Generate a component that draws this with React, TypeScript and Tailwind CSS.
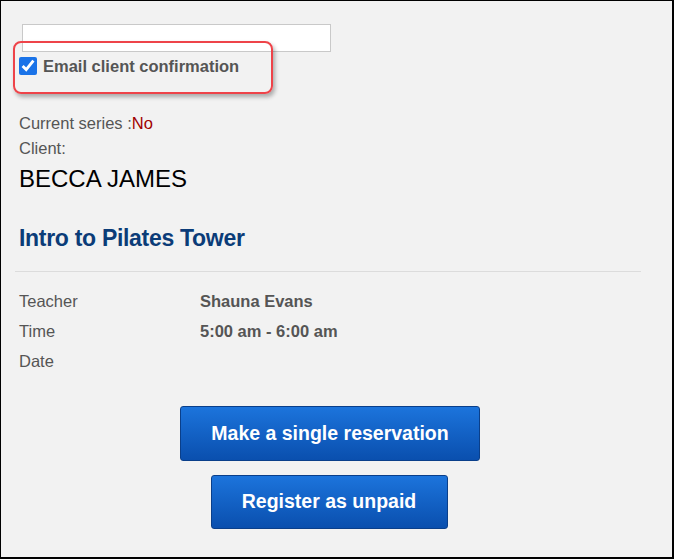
export default function App() {
  return (
    <div
      className="relative h-[559px] w-[674px] overflow-hidden border-t border-l border-r-2 border-b-2 border-black bg-[#f2f2f2] text-[#555]"
      style={{ fontFamily: '"Liberation Sans", Arial, sans-serif' }}
    >
      <div className="pl-[18px] pr-[31px]">
        <input
          type="text"
          className="mt-[23px] ml-[3px] block h-[28px] w-[309px] border border-[#c9c9c9] bg-white outline-none"
        />
        <label className="mt-[4px] flex h-[20px] items-center gap-[6px]">
          <input type="checkbox" defaultChecked className="m-0 h-[18px] w-[18px] accent-[#1a73e8]" />
          <span className="text-[16.5px] font-bold text-[#555]">Email client confirmation</span>
        </label>

        <div className="mt-[35px] text-[16.5px] leading-[25px]">
          Current series :<span className="text-[#a00000]">No</span>
        </div>
        <div className="text-[16.5px] leading-[25px]">Client:</div>
        <div className="mt-[3px] text-[24px] leading-[30px] text-black">BECCA JAMES</div>

        <h2 className="mt-[29px] text-[23px] font-bold leading-[30px] tracking-[-0.3px] text-[#0b3c78]">
          Intro to Pilates Tower
        </h2>
        <div className="mt-[18px] -ml-[4px] border-t border-[#dcdcdc]" />

        <div className="mt-[14px] grid grid-cols-[181px_1fr] text-[16.5px] leading-[30px]">
          <span>Teacher</span>
          <span className="font-bold">Shauna Evans</span>
          <span>Time</span>
          <span className="font-bold">5:00 am - 6:00 am</span>
          <span>Date</span>
          <span />
        </div>
      </div>

      <div className="mt-[30px] flex flex-col items-center gap-[14px] pr-[13px]">
        <button className="h-[55px] w-[300px] rounded-[3px] border border-[#0a3f8a] bg-gradient-to-b from-[#1c74dc] to-[#0a4fae] text-[19.5px] font-bold text-white">
          Make a single reservation
        </button>
        <button className="-ml-[2px] h-[54px] w-[237px] rounded-[3px] border border-[#0a3f8a] bg-gradient-to-b from-[#1c74dc] to-[#0a4fae] text-[19.5px] font-bold text-white">
          Register as unpaid
        </button>
      </div>

      {/* annotation highlight drawn over the form */}
      <div className="pointer-events-none absolute left-[12px] top-[40px] h-[53px] w-[260px] rounded-[8px] border-2 border-[#ee4349] shadow-[2px_3px_4px_rgba(0,0,0,0.3)]" />
    </div>
  );
}
